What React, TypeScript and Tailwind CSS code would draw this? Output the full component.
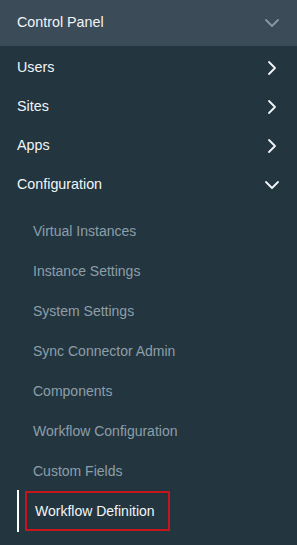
import React from "react";

const Right = () => (
  <svg width="10" height="16" viewBox="0 0 10 16" fill="none">
    <path d="M2 2 L8 8 L2 14" stroke="#f2f5f7" strokeWidth="1.8" strokeLinecap="round" strokeLinejoin="round" />
  </svg>
);

const Down = ({ color }: { color: string }) => (
  <svg width="16" height="10" viewBox="0 0 16 10" fill="none">
    <path d="M2 2 L8 8 L14 2" stroke={color} strokeWidth="1.8" strokeLinecap="round" strokeLinejoin="round" />
  </svg>
);

const subs = [
  "Virtual Instances",
  "Instance Settings",
  "System Settings",
  "Sync Connector Admin",
  "Components",
  "Workflow Configuration",
  "Custom Fields",
];

export default function App() {
  return (
    <div
      className="w-[297px] h-[545px] bg-[#233640] overflow-hidden"
      style={{ fontFamily: '"Liberation Sans", Arial, sans-serif' }}
    >
      <div className="h-[46px] bg-[#3b4b58] flex items-center justify-between pl-[17px] pr-[17px] pb-[1px]">
        <span className="text-[14.3px] text-[#f2f5f7]">Control Panel</span>
        <Down color="#8798a5" />
      </div>
      {["Users", "Sites", "Apps"].map((t) => (
        <div key={t} className="h-[39px] flex items-center justify-between pl-[17px] pr-[20px] pt-[4px]">
          <span className="text-[14.3px] text-[#f2f5f7]">{t}</span>
          <Right />
        </div>
      ))}
      <div className="h-[39px] flex items-center justify-between pl-[17px] pr-[17px] pt-[4px]">
        <span className="text-[14.3px] text-[#f2f5f7]">Configuration</span>
        <Down color="#f2f5f7" />
      </div>
      <div className="pt-[8px] flex flex-col">
        {subs.map((t) => (
          <div key={t} className="h-[40px] flex items-center pl-[33px] pt-[2px]">
            <span className="text-[14px] text-[#8d9ea9]">{t}</span>
          </div>
        ))}
        <div className="h-[42px] flex items-stretch pl-[17px]">
          <div className="w-[2px] bg-white" />
          <div className="ml-[6px] my-[1px] w-[145px] border-2 border-[#c4161c] flex items-center pl-[8px]">
            <span className="text-[14px] text-[#f2f5f7]">Workflow Definition</span>
          </div>
        </div>
      </div>
    </div>
  );
}
